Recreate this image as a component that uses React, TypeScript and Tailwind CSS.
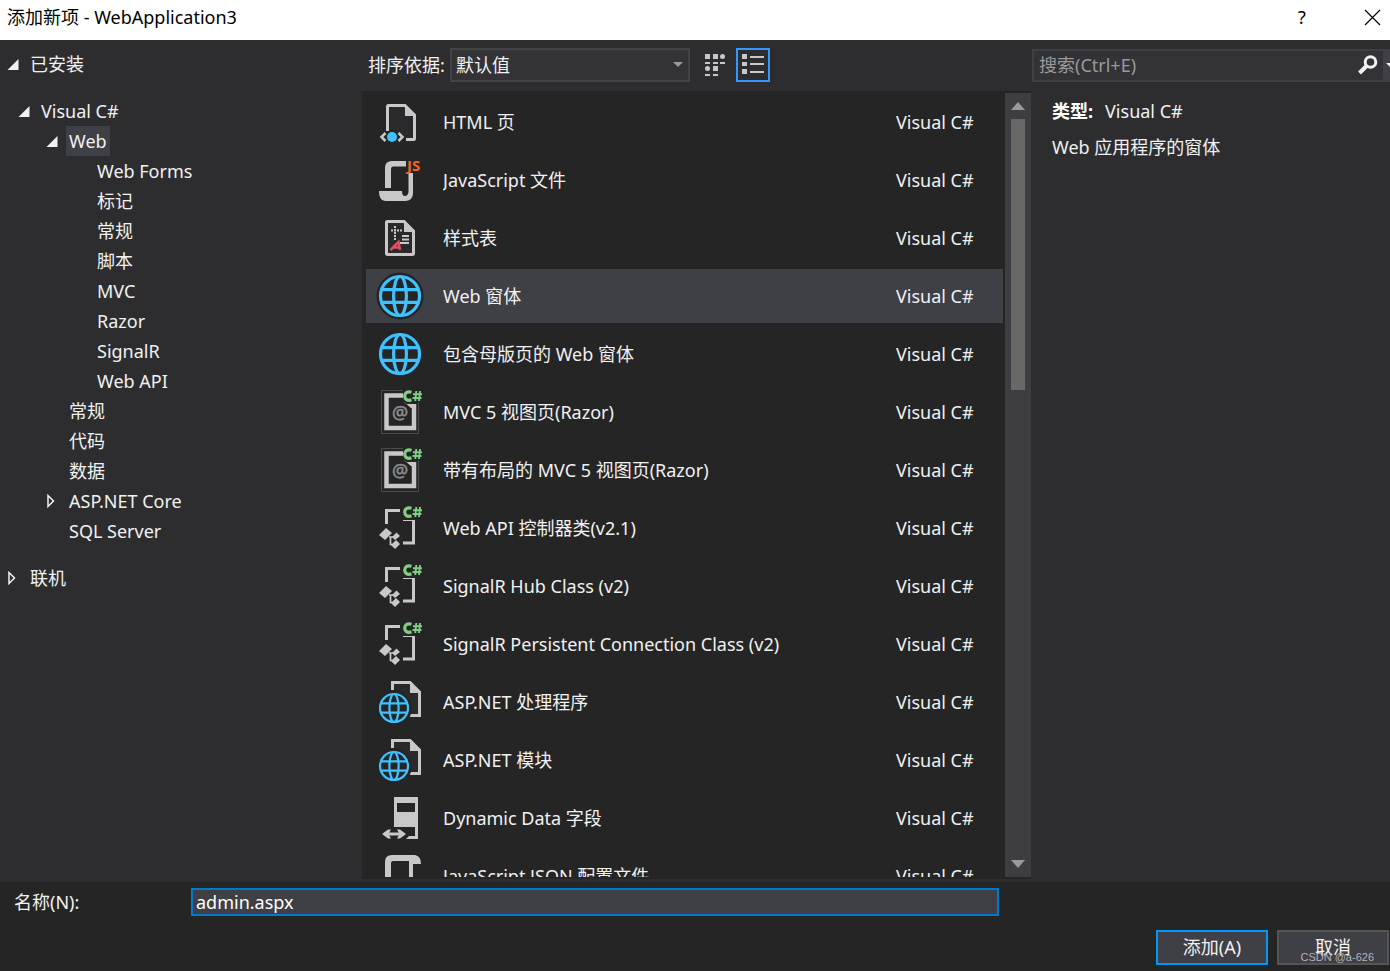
import { useRef, useState } from "react";
import type { ReactNode } from "react";

type IconKind = "html" | "js" | "css" | "globe" | "razor" | "api" | "asp" | "data" | "json";

const templates: { name: string; icon: IconKind }[] = [
  { name: "HTML 页", icon: "html" },
  { name: "JavaScript 文件", icon: "js" },
  { name: "样式表", icon: "css" },
  { name: "Web 窗体", icon: "globe" },
  { name: "包含母版页的 Web 窗体", icon: "globe" },
  { name: "MVC 5 视图页(Razor)", icon: "razor" },
  { name: "带有布局的 MVC 5 视图页(Razor)", icon: "razor" },
  { name: "Web API 控制器类(v2.1)", icon: "api" },
  { name: "SignalR Hub Class (v2)", icon: "api" },
  { name: "SignalR Persistent Connection Class (v2)", icon: "api" },
  { name: "ASP.NET 处理程序", icon: "asp" },
  { name: "ASP.NET 模块", icon: "asp" },
  { name: "Dynamic Data 字段", icon: "data" },
  { name: "JavaScript JSON 配置文件", icon: "json" },
];

const iconText = "font-['Noto_Sans',sans-serif] font-bold";

function CSharpBadge() {
  return (
    <g fill="none" stroke="#7fce82">
      <path d="M35.500 4.300C31 3 28.700 5 28.700 8.100S31 13.200 35.500 11.900" strokeWidth="3.200" />
      <path d="M40.300 3L39.300 13M44 3L43 13M37 6.300H46M36.500 10H45.500" strokeWidth="1.900" />
    </g>
  );
}

function Globe({ cx, cy, r, w }: { cx: number; cy: number; r: number; w: number }) {
  const dy = r * 0.33;
  const dx = r * 0.93;
  return (
    <g fill="none" stroke="#3fc1ff" strokeWidth={w}>
      <circle cx={cx} cy={cy} r={r + 4} fill="#252526" stroke="none" />
      <circle cx={cx} cy={cy} r={r} />
      <ellipse cx={cx} cy={cy} rx={r * 0.33} ry={r} />
      <path d={`M${cx - dx} ${cy - dy}H${cx + dx}M${cx - dx} ${cy + dy}H${cx + dx}`} />
    </g>
  );
}

const glyphs: Record<IconKind, ReactNode> = {
  html: (
    <>
      <path d="M11.500 33V8.500Q11.500 7.500 12.500 7.500H29L38.500 17V40.500Q38.500 41.500 37.500 41.500H30" fill="#2a2a2c" stroke="#c8c8c8" strokeWidth="3" />
      <path d="M29 6L40 17V18H29Z" fill="#c8c8c8" />
      <circle cx="16" cy="39" r="7" fill="#252526" />
      <circle cx="16" cy="39" r="5" fill="#3fc1ff" />
      <path d="M9.500 35L5.500 39L9.500 43M22.500 35L26.500 39L22.500 43" fill="none" stroke="#c8c8c8" strokeWidth="2.500" />
    </>
  ),
  js: (
    <>
      <path d="M9 32V12Q9 5 16 5H30V10.500H17Q15 10.500 15 13V32ZM3 35H26C26 38.500 27 40 29 40S32.500 38.500 32.500 35V17H37V37C37 42 34 45 29 45H10C5 45 3 41 3 35Z" fill="#c8c8c8" />
      <text x="31" y="15" fontSize="15" fill="#f4641f" className={iconText}>JS</text>
    </>
  ),
  css: (
    <>
      <path d="M28 7.500H11.500Q10.500 7.500 10.500 8.500V39.500Q10.500 40.500 11.500 40.500H36.500Q37.500 40.500 37.500 39.500V17Z" fill="#2a2a2c" stroke="#c8c8c8" strokeWidth="3" />
      <path d="M28 6L39 17V18H28Z" fill="#c8c8c8" />
      <path d="M19 12V27M15 16.500H27" fill="none" stroke="#c8c8c8" strokeWidth="2" strokeDasharray="2 1" />
      <path d="M26 22H33M26 25.500H33M24 29H33" stroke="#c8c8c8" strokeWidth="1.800" />
      <path d="M14.500 36L22.500 28L24 36M17 33.500H24" fill="none" stroke="#e0505f" strokeWidth="2.500" />
    </>
  ),
  globe: <Globe cx={24} cy={24} r={19.5} w={3.2} />,
  razor: (
    <>
      <path d="M27 2.500H5.500V45.500H42.500V14.500" fill="none" stroke="#4b4b4c" />
      <path d="M27 7.500H10.500V40H38V16" fill="none" stroke="#c8c8c8" strokeWidth="4.500" />
      <path d="M27 13L30 16H39V20H35Z" fill="#c8c8c8" />
      <text x="24" y="31" fontSize="18" textAnchor="middle" fill="#8c8c8c" stroke="#8c8c8c" strokeWidth="0.500" className="font-['Noto_Sans',sans-serif]">@</text>
      <CSharpBadge />
    </>
  ),
  api: (
    <>
      <path d="M10.500 20V6.500H24M37.500 16V39H27" fill="none" stroke="#c8c8c8" strokeWidth="3" />
      <path d="M27 16.500H39" stroke="#c8c8c8" />
      <path d="M10 24L16 29L9 36L3 31ZM20.500 28.500L24 32L19 36L16 33ZM20 36L24 40L19 45L15 41Z" fill="#c8c8c8" />
      <path d="M13 33H19M14.500 33V40.500H18" fill="none" stroke="#c8c8c8" strokeWidth="1.700" />
      <CSharpBadge />
    </>
  ),
  asp: (
    <>
      <path d="M16.500 12V4.500H34L43.500 14V37.500H34" fill="#2a2a2c" stroke="#c8c8c8" strokeWidth="3" />
      <path d="M34 3L45 14V15H34Z" fill="#c8c8c8" />
      <Globe cx={18} cy={30} r={14} w={2.2} />
    </>
  ),
  data: (
    <>
      <path d="M18 3H42V45H30L33 42H39V33H18ZM21 9V18H39V9Z" fill="#c8c8c8" fillRule="evenodd" />
      <path d="M8 40H28" stroke="#c8c8c8" strokeWidth="3" />
      <path d="M6 40L12 35.500H15L12.500 40L15 44.500H12ZM30 40L24 35.500H21L23.500 40L21 44.500H24Z" fill="#c8c8c8" />
    </>
  ),
  json: (
    <path d="M9 32V10Q9 3 16 3H39Q45 4 45 12H37V37Q37 43 29 43H10C5 43 3 39 3 33H33V9H17Q15 9 15 11V32Z" fill="#c8c8c8" />
  ),
};

function TemplateIcon({ kind }: { kind: IconKind }) {
  return (
    <svg viewBox="0 0 48 48" className="size-12 shrink-0" aria-hidden="true">
      {glyphs[kind]}
    </svg>
  );
}

function Arrow({ open }: { open: boolean }) {
  return (
    <svg viewBox="0 0 12 16" className="h-4 w-3 shrink-0" aria-hidden="true">
      {open ? (
        <path d="M11.500 3V14H0.500Z" fill="#f1f1f1" />
      ) : (
        <path d="M2 2.500V13.500L7.500 8Z" fill="none" stroke="#f1f1f1" strokeWidth="1.500" />
      )}
    </svg>
  );
}

function TreeRow({ label, open, selected = false }: { label: string; open?: boolean; selected?: boolean }) {
  return (
    <button type="button" className="flex h-[30px] items-center gap-2 text-left">
      {open === undefined ? <span className="w-3" /> : <Arrow open={open} />}
      <span className={selected ? "bg-[#3f3f46] px-[3px] leading-[30px]" : "px-[3px] leading-[30px]"}>{label}</span>
    </button>
  );
}

function Sidebar() {
  return (
    <nav className="flex w-[362px] shrink-0 flex-col items-start gap-[17px] overflow-hidden pt-[9px] pl-[7px]">
      <TreeRow label="已安装" open />
      <div className="flex flex-col items-start pl-[11px]">
        <TreeRow label="Visual C#" open />
        <div className="flex flex-col items-start pl-7">
          <TreeRow label="Web" open selected />
          <div className="flex flex-col items-start pl-7">
            {["Web Forms", "标记", "常规", "脚本", "MVC", "Razor", "SignalR", "Web API"].map((label) => (
              <TreeRow key={label} label={label} />
            ))}
          </div>
          <TreeRow label="常规" />
          <TreeRow label="代码" />
          <TreeRow label="数据" />
          <TreeRow label="ASP.NET Core" open={false} />
          <TreeRow label="SQL Server" />
        </div>
      </div>
      <TreeRow label="联机" open={false} />
    </nav>
  );
}

function Toolbar() {
  return (
    <div className="flex h-[51px] shrink-0 items-center pb-[2px] pl-[6px]">
      <label htmlFor="sort" className="w-[82px] whitespace-nowrap">排序依据:</label>
      <div className="grid w-[240px] items-center">
        <select id="sort" className="col-start-1 row-start-1 h-[34px] w-full appearance-none border-2 border-[#434346] bg-[#333337] px-1 outline-none">
          <option>默认值</option>
        </select>
        <svg viewBox="0 0 10 6" className="pointer-events-none col-start-1 row-start-1 mr-[7px] h-[6px] w-[10px] justify-self-end" aria-hidden="true">
          <path d="M0 0H10L5 5Z" fill="#999999" />
        </svg>
      </div>
      <button type="button" aria-label="小图标" className="ml-2 flex size-[34px] items-center justify-center">
        <svg viewBox="0 0 24 24" className="size-6" aria-hidden="true">
          <g fill="#c8c8c8">
            <path d="M2 1H7V6H2ZM10 1H15V6H10ZM10 13H15V18H10ZM2 9H7V11H2ZM10 9H15V11H10ZM17 9H22V11H17ZM2 21H7V23H2ZM10 21H15V23H10Z" />
            <circle cx="19.500" cy="3.500" r="2.500" />
            <circle cx="4.500" cy="15.500" r="2.500" />
          </g>
        </svg>
      </button>
      <button type="button" aria-label="列表" className="ml-1 flex size-[34px] items-center justify-center border-2 border-[#3399ff]">
        <svg viewBox="0 0 24 24" className="size-6 shrink-0" aria-hidden="true">
          <path d="M1 1H6V6H1ZM1 9H6V13H1ZM1 16H6V21H1ZM9 3H23V5H9ZM9 10H23V12H9ZM9 18H23V20H9Z" fill="#c8c8c8" />
        </svg>
      </button>
    </div>
  );
}

function TemplateList() {
  const [selected, setSelected] = useState(3);
  const [offset, setOffset] = useState(0);
  const list = useRef<HTMLUListElement>(null);
  const scroll = (amount: number) => list.current?.scrollBy({ top: amount });
  return (
    <div className="flex min-h-0 flex-1 bg-[#252526] py-[2px]">
      <ul
        ref={list}
        onScroll={(e) => {
          const el = e.currentTarget;
          setOffset(el.scrollTop / Math.max(1, el.scrollHeight - el.clientHeight));
        }}
        className="min-w-0 flex-1 overflow-y-auto pr-[2px] pl-1 [scrollbar-width:none]"
      >
        {templates.map((item, index) => (
          <li key={item.name} className="py-[2px]">
            <button
              type="button"
              aria-pressed={index === selected}
              onClick={() => setSelected(index)}
              className={
                index === selected
                  ? "flex h-[54px] w-full items-center bg-[#3f3f46] pl-[10px] text-left"
                  : "flex h-[54px] w-full items-center pl-[10px] text-left"
              }
            >
              <TemplateIcon kind={item.icon} />
              <span className="ml-[19px] flex-1 truncate">{item.name}</span>
              <span className="w-[107px] shrink-0">Visual C#</span>
            </button>
          </li>
        ))}
      </ul>
      <div className="flex w-[26px] shrink-0 flex-col items-center bg-[#3e3e42]">
        <button type="button" aria-label="向上滚动" onClick={() => scroll(-58)} className="flex h-[26px] w-full items-center justify-center">
          <svg viewBox="0 0 14 8" className="h-2 w-[14px]" aria-hidden="true"><path d="M0 8L7 0L14 8Z" fill="#999999" /></svg>
        </button>
        <div className="flex w-[14px] flex-1 flex-col">
          <div style={{ flexGrow: offset }} />
          <div className="h-[37%] bg-[#686868]" />
          <div style={{ flexGrow: 1 - offset }} />
        </div>
        <button type="button" aria-label="向下滚动" onClick={() => scroll(58)} className="flex h-[26px] w-full items-center justify-center">
          <svg viewBox="0 0 14 8" className="h-2 w-[14px]" aria-hidden="true"><path d="M0 0L7 8L14 0Z" fill="#999999" /></svg>
        </button>
      </div>
    </div>
  );
}

function Details() {
  return (
    <aside className="w-[358px] shrink-0 pt-[9px]">
      <div className="flex h-[33px] items-center border-2 border-r-0 border-[#3f3f46] bg-[#333337]">
        <input
          type="search"
          aria-label="搜索"
          placeholder="搜索(Ctrl+E)"
          className="min-w-0 flex-1 bg-transparent px-[5px] pb-[2px] outline-none placeholder:text-[#999999]"
        />
        <button type="button" aria-label="搜索" className="mr-[5px] pb-[2px]">
          <svg viewBox="0 0 20 20" className="size-5" aria-hidden="true">
            <circle cx="12.500" cy="7" r="5.300" fill="none" stroke="#f1f1f1" strokeWidth="3" />
            <path d="M9 10.500L1.500 18" stroke="#f1f1f1" strokeWidth="4" />
          </svg>
        </button>
        <button type="button" aria-label="搜索选项" className="flex h-full w-[7px] items-center justify-end overflow-hidden bg-[#3f3f46]">
          <svg viewBox="0 0 4 6" className="h-[6px] w-1" aria-hidden="true"><path d="M0 0H4V4Z" fill="#f1f1f1" /></svg>
        </button>
      </div>
      <dl className="flex gap-3 px-5 pt-[14px] leading-[30px]">
        <dt className="font-bold text-white">类型:</dt>
        <dd>Visual C#</dd>
      </dl>
      <p className="px-5 pt-[6px] leading-[30px]">Web 应用程序的窗体</p>
    </aside>
  );
}

export default function App() {
  return (
    <div className="flex h-screen min-w-[1100px] flex-col overflow-hidden bg-[#2d2d30] font-['Noto_Sans','Noto_Sans_CJK_SC',sans-serif] text-[18px] leading-6 text-[#f1f1f1]">
      <header className="flex h-10 shrink-0 items-center bg-white pr-2 pb-[6px] pl-[7px] text-black">
        <h1 className="flex-1">添加新项 - WebApplication3</h1>
        <button type="button" aria-label="帮助" className="w-5 text-center">?</button>
        <button type="button" aria-label="关闭" className="ml-[50px]">
          <svg viewBox="0 0 20 20" className="size-5" aria-hidden="true">
            <path d="M3 3L18 18M18 3L3 18" stroke="#000000" strokeWidth="1.200" />
          </svg>
        </button>
      </header>
      <main className="flex min-h-0 flex-1">
        <Sidebar />
        <section className="flex min-w-0 flex-1 flex-col pb-[3px]">
          <Toolbar />
          <div className="flex min-h-0 flex-1 flex-col pr-[1px]">
            <TemplateList />
          </div>
        </section>
        <Details />
      </main>
      <footer className="shrink-0 bg-[#252526] pt-[6px] pb-[6px]">
        <div className="flex items-center pr-[391px] pl-[14px]">
          <label htmlFor="item-name" className="w-[177px] shrink-0">名称(N):</label>
          <input
            id="item-name"
            type="text"
            defaultValue="admin.aspx"
            className="h-7 min-w-0 flex-1 border-2 border-[#007acc] bg-[#3f3f46] px-[3px] text-white outline-none"
          />
        </div>
        <div className="relative flex justify-end gap-[9px] pt-[14px] pr-[1px]">
          <button type="button" className="h-[35px] w-28 border-2 border-[#0097fb] bg-[#3f3f46] pb-[2px]">添加(A)</button>
          <button type="button" className="h-[35px] w-28 border-2 border-[#555555] bg-[#3f3f46] pb-[2px]">取消</button>
          <span className="pointer-events-none absolute right-4 bottom-0 font-['Liberation_Sans',sans-serif] text-[11px] leading-4 whitespace-nowrap text-[#b4b4b6]">CSDN @a-626</span>
        </div>
      </footer>
    </div>
  );
}
